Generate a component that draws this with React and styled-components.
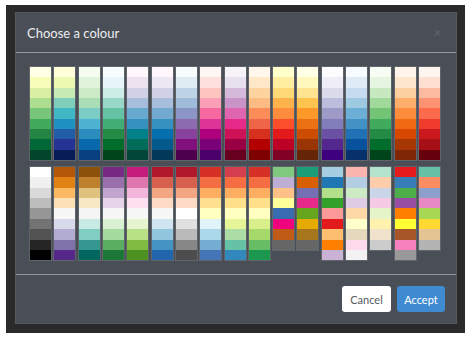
import React from 'react';
import styled, { createGlobalStyle } from 'styled-components';

const GlobalStyle = createGlobalStyle`
  body {
    margin: 0;
    background: #ffffff;
    font-family: Lato, "Open Sans", sans-serif;
  }
`;

const SEQUENTIAL = [
  ['#ffffe5', '#f7fcb9', '#d9f0a3', '#addd8e', '#78c679', '#41ab5d', '#238443', '#006837', '#004529'],
  ['#ffffd9', '#edf8b1', '#c7e9b4', '#7fcdbb', '#41b6c4', '#1d91c0', '#225ea8', '#253494', '#081d58'],
  ['#f7fcf0', '#e0f3db', '#ccebc5', '#a8ddb5', '#7bccc4', '#4eb3d3', '#2b8cbe', '#0868ac', '#084081'],
  ['#f7fcfd', '#e5f5f9', '#ccece6', '#99d8c9', '#66c2a4', '#41ae76', '#238b45', '#006d2c', '#00441b'],
  ['#fff7fb', '#ece2f0', '#d0d1e6', '#a6bddb', '#67a9cf', '#3690c0', '#02818a', '#016c59', '#014636'],
  ['#fff7fb', '#ece7f2', '#d0d1e6', '#a6bddb', '#74a9cf', '#3690c0', '#0570b0', '#045a8d', '#023858'],
  ['#f7fcfd', '#e0ecf4', '#bfd3e6', '#9ebcda', '#8c96c6', '#8c6bb1', '#88419d', '#810f7c', '#4d004b'],
  ['#fff7f3', '#fde0dd', '#fcc5c0', '#fa9fb5', '#f768a1', '#dd3497', '#ae017e', '#7a0177', '#49006a'],
  ['#f7f4f9', '#e7e1ef', '#d4b9da', '#c994c7', '#df65b0', '#e7298a', '#ce1256', '#980043', '#67001f'],
  ['#fff7ec', '#fee8c8', '#fdd49e', '#fdbb84', '#fc8d59', '#ef6548', '#d7301f', '#b30000', '#7f0000'],
  ['#ffffcc', '#ffeda0', '#fed976', '#feb24c', '#fd8d3c', '#fc4e2a', '#e31a1c', '#bd0026', '#800026'],
  ['#ffffe5', '#fff7bc', '#fee391', '#fec44f', '#fe9929', '#ec7014', '#cc4c02', '#993404', '#662506'],
  ['#fcfbfd', '#efedf5', '#dadaeb', '#bcbddc', '#9e9ac8', '#807dba', '#6a51a3', '#54278f', '#3f007d'],
  ['#f7fbff', '#deebf7', '#c6dbef', '#9ecae1', '#6baed6', '#4292c6', '#2171b5', '#08519c', '#08306b'],
  ['#f7fcf5', '#e5f5e0', '#c7e9c0', '#a1d99b', '#74c476', '#41ab5d', '#238b45', '#006d2c', '#00441b'],
  ['#fff5eb', '#fee6ce', '#fdd0a2', '#fdae6b', '#fd8d3c', '#f16913', '#d94801', '#a63603', '#7f2704'],
  ['#fff5f0', '#fee0d2', '#fcbba1', '#fc9272', '#fb6a4a', '#ef3b2c', '#cb181d', '#a50f15', '#67000d'],
];

const DIVERGING = [
  ['#ffffff', '#f0f0f0', '#d9d9d9', '#bdbdbd', '#969696', '#737373', '#525252', '#252525', '#000000'],
  ['#b35806', '#e08214', '#fdb863', '#fee0b6', '#f7f7f7', '#d8daeb', '#b2abd2', '#8073ac', '#542788'],
  ['#8c510a', '#bf812d', '#dfc27d', '#f6e8c3', '#f5f5f5', '#c7eae5', '#80cdc1', '#35978f', '#01665e'],
  ['#762a83', '#9970ab', '#c2a5cf', '#e7d4e8', '#f7f7f7', '#d9f0d3', '#a6dba0', '#5aae61', '#1b7837'],
  ['#c51b7d', '#de77ae', '#f1b6da', '#fde0ef', '#f7f7f7', '#e6f5d0', '#b8e186', '#7fbc41', '#4d9221'],
  ['#b2182b', '#d6604d', '#f4a582', '#fddbc7', '#f7f7f7', '#d1e5f0', '#92c5de', '#4393c3', '#2166ac'],
  ['#b2182b', '#d6604d', '#f4a582', '#fddbc7', '#ffffff', '#e0e0e0', '#bababa', '#878787', '#4d4d4d'],
  ['#d73027', '#f46d43', '#fdae61', '#fee090', '#ffffbf', '#e0f3f8', '#abd9e9', '#74add1', '#4575b4'],
  ['#d53e4f', '#f46d43', '#fdae61', '#fee08b', '#ffffbf', '#e6f598', '#abdda4', '#66c2a5', '#3288bd'],
  ['#d73027', '#f46d43', '#fdae61', '#fee08b', '#ffffbf', '#d9ef8b', '#a6d96a', '#66bd63', '#1a9850'],
  ['#7fc97f', '#beaed4', '#fdc086', '#ffff99', '#386cb0', '#f0027f', '#bf5b17', '#666666'],
  ['#1b9e77', '#d95f02', '#7570b3', '#e7298a', '#66a61e', '#e6ab02', '#a6761d', '#666666'],
  ['#a6cee3', '#1f78b4', '#b2df8a', '#33a02c', '#fb9a99', '#e31a1c', '#fdbf6f', '#ff7f00', '#cab2d6'],
  ['#fbb4ae', '#b3cde3', '#ccebc5', '#decbe4', '#fed9a6', '#ffffcc', '#e5d8bd', '#fddaec', '#f2f2f2'],
  ['#b3e2cd', '#fdcdac', '#cbd5e8', '#f4cae4', '#e6f5c9', '#fff2ae', '#f1e2cc', '#cccccc'],
  ['#e41a1c', '#377eb8', '#4daf4a', '#984ea3', '#ff7f00', '#ffff33', '#a65628', '#f781bf', '#999999'],
  ['#66c2a5', '#fc8d62', '#8da0cb', '#e78ac3', '#a6d854', '#ffd92f', '#e5c494', '#b3b3b3'],
];

const Backdrop = styled.div`
  margin: 5px 0 0 6px;
  width: 459px;
  height: 328px;
  box-sizing: border-box;
  padding: 8px 9px 10px 10px;
  background: #2a2a2b;
`;

const Modal = styled.div`
  width: 440px;
  height: 310px;
  background: #4a4f57;
  display: flex;
  flex-direction: column;
  box-shadow: 0 0 0 1px #54595f;
`;

const Header = styled.div`
  height: 40px;
  box-sizing: border-box;
  padding: 0 14px 0 11px;
  display: flex;
  align-items: center;
  justify-content: space-between;
  border-bottom: 1px solid #959aa0;
`;

const Title = styled.h4`
  margin: 0;
  font-size: 13px;
  font-weight: 400;
  color: #eceef0;
`;

const Close = styled.span`
  font-size: 15px;
  line-height: 1;
  color: #5d6269;
`;

const Body = styled.div`
  padding: 14px 0 14px 14px;
  display: flex;
  flex-direction: column;
  gap: 7px;
`;

const PaletteRow = styled.div`
  width: 410px;
  display: grid;
  grid-template-columns: repeat(17, 21px);
  justify-content: space-between;
  align-items: start;
`;

const Palette = styled.div`
  display: flex;
  flex-direction: column;
  box-shadow: 0 0 0 1px rgba(255, 255, 255, 0.12);
  cursor: pointer;
`;

const Swatch = styled.div`
  height: 10.35px;
  background: ${(p) => p.$color};
`;

const Footer = styled.div`
  flex: 1;
  border-top: 1px solid #959aa0;
  display: flex;
  justify-content: flex-end;
  align-items: flex-start;
  gap: 6px;
  padding: 11px 11px 0 0;
`;

const Button = styled.button`
  height: 26px;
  width: ${(p) => (p.$primary ? '48px' : '49px')};
  border: none;
  border-radius: 3px;
  padding: 0;
  font-family: Lato, "Open Sans", sans-serif;
  font-size: 11px;
  background: ${(p) => (p.$primary ? '#3f8bd1' : '#ffffff')};
  color: ${(p) => (p.$primary ? '#ffffff' : '#555a60')};
`;

const PaletteGroup = ({ palettes }) => (
  <PaletteRow>
    {palettes.map((colors, i) => (
      <Palette key={i}>
        {colors.map((c, j) => (
          <Swatch key={j} $color={c} />
        ))}
      </Palette>
    ))}
  </PaletteRow>
);

export default function App() {
  return (
    <>
      <GlobalStyle />
      <Backdrop>
        <Modal>
          <Header>
            <Title>Choose a colour</Title>
            <Close>×</Close>
          </Header>
          <Body>
            <PaletteGroup palettes={SEQUENTIAL} />
            <PaletteGroup palettes={DIVERGING} />
          </Body>
          <Footer>
            <Button>Cancel</Button>
            <Button $primary>Accept</Button>
          </Footer>
        </Modal>
      </Backdrop>
    </>
  );
}
